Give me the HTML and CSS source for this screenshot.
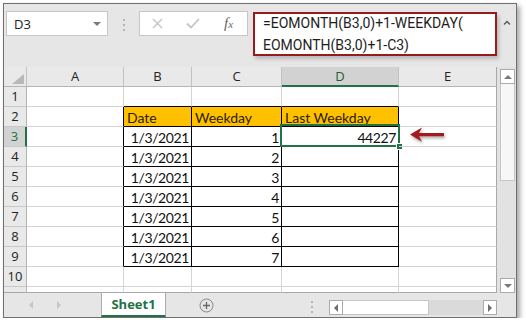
FILE: index.html
```html
<!DOCTYPE html>
<html lang="en">
<head>
    <meta charset="UTF-8">
    <meta name="viewport" content="width=device-width, initial-scale=1.0">
    <title>Last Weekday of Month</title>
    <link rel="stylesheet" href="styles.css">
</head>
<body>
    <div class="window">
        <div class="formula-area">
            <div class="name-box">
                <span>D3</span>
                <span class="drop"></span>
            </div>
            <div class="grip"><i></i><i></i><i></i></div>
            <div class="fx-buttons">
                <svg class="btn-cancel" width="11" height="11" viewBox="0 0 11 11"><path d="M1 1L10 10M10 1L1 10" stroke="#c4c4c4" stroke-width="1.4" fill="none"/></svg>
                <svg class="btn-enter" width="14" height="11" viewBox="0 0 14 11"><path d="M1 5.5L5 9.5L13 1" stroke="#c4c4c4" stroke-width="1.8" fill="none"/></svg>
                <span class="fx">f<sub>x</sub></span>
            </div>
            <div class="formula-bar">
                <div class="formula-text">=EOMONTH(B3,0)+1-WEEKDAY(<br>EOMONTH(B3,0)+1-C3)</div>
            </div>
            <div class="expand">
                <svg width="8" height="5" viewBox="0 0 8 5"><path d="M1 4.5L4 1.5L7 4.5" stroke="#555" stroke-width="1.4" fill="none"/></svg>
            </div>
        </div>

        <div class="sheet-area">
            <div class="grid">
                <div class="corner"><span class="corner-tri"></span></div>
                <div class="ch">A</div>
                <div class="ch">B</div>
                <div class="ch">C</div>
                <div class="ch sel">D</div>
                <div class="ch">E</div>

                <div class="rh">1</div>
                <div class="c"></div>
                <div class="c edge-b"></div>
                <div class="c edge-b"></div>
                <div class="c edge-b"></div>
                <div class="c"></div>

                <div class="rh">2</div>
                <div class="c edge-r"></div>
                <div class="c box head">Date</div>
                <div class="c box head">Weekday</div>
                <div class="c box head">Last Weekday</div>
                <div class="c"></div>

                <div class="rh sel">3</div>
                <div class="c edge-r"></div>
                <div class="c box num">1/3/2021</div>
                <div class="c box num">1</div>
                <div class="c box num active">44227<span class="sel-box"><span class="fill-handle"></span></span></div>
                <div class="c arrow-cell">
                    <svg class="arrow" width="40" height="20" viewBox="0 0 40 20"><path d="M2 8.5L14 1.5L11 7L36 7L36 10.3L11 10.3L14 15.8Z" fill="#a3191c"/></svg>
                </div>

                <div class="rh">4</div>
                <div class="c edge-r"></div>
                <div class="c box num">1/3/2021</div>
                <div class="c box num">2</div>
                <div class="c box"></div>
                <div class="c"></div>

                <div class="rh">5</div>
                <div class="c edge-r"></div>
                <div class="c box num">1/3/2021</div>
                <div class="c box num">3</div>
                <div class="c box"></div>
                <div class="c"></div>

                <div class="rh">6</div>
                <div class="c edge-r"></div>
                <div class="c box num">1/3/2021</div>
                <div class="c box num">4</div>
                <div class="c box"></div>
                <div class="c"></div>

                <div class="rh">7</div>
                <div class="c edge-r"></div>
                <div class="c box num">1/3/2021</div>
                <div class="c box num">5</div>
                <div class="c box"></div>
                <div class="c"></div>

                <div class="rh">8</div>
                <div class="c edge-r"></div>
                <div class="c box num">1/3/2021</div>
                <div class="c box num">6</div>
                <div class="c box"></div>
                <div class="c"></div>

                <div class="rh">9</div>
                <div class="c edge-r"></div>
                <div class="c box num">1/3/2021</div>
                <div class="c box num">7</div>
                <div class="c box"></div>
                <div class="c"></div>

                <div class="rh">10</div>
                <div class="c"></div>
                <div class="c"></div>
                <div class="c"></div>
                <div class="c"></div>
                <div class="c"></div>

                <div class="rh part"></div>
                <div class="c part"></div>
                <div class="c part"></div>
                <div class="c part"></div>
                <div class="c part"></div>
                <div class="c part"></div>
            </div>

            <div class="vscroll">
                <div class="sb-btn"><span class="tri-up"></span></div>
                <div class="sb-thumb"></div>
                <div class="sb-btn bottom"><span class="tri-down"></span></div>
            </div>
        </div>

        <div class="tab-bar">
            <div class="tab-nav">
                <span class="tri-left light"></span>
                <span class="tri-right light"></span>
            </div>
            <div class="tab">Sheet1</div>
            <div class="add-sheet">
                <svg width="15" height="15" viewBox="0 0 15 15"><circle cx="7.5" cy="7.5" r="6.5" stroke="#8a8a8a" stroke-width="1" fill="none"/><path d="M7.5 4V11M4 7.5H11" stroke="#666" stroke-width="1.3"/></svg>
            </div>
            <div class="grip tab-grip"><i></i><i></i><i></i></div>
            <div class="hscroll">
                <div class="hs-btn"><span class="tri-left"></span></div>
                <div class="hs-thumb"></div>
                <div class="hs-track"></div>
                <div class="hs-btn"><span class="tri-right"></span></div>
            </div>
        </div>
    </div>
</body>
</html>
```

FILE: styles.css
```css
* {
    box-sizing: border-box;
}

body {
    margin: 0;
    background: #fff;
    font-family: "Open Sans", sans-serif;
    color: #222;
}

.window {
    width: 514px;
    height: 315px;
    margin: 3px 0 0 3px;
    border: 1px solid #6f6f6f;
    background: #e6e6e6;
    box-shadow: 3px 3px 5px rgba(0, 0, 0, 0.35);
    display: flex;
    flex-direction: column;
}

/* formula bar row */
.formula-area {
    height: 63px;
    display: flex;
    align-items: flex-start;
    padding: 7px 0 0 2px;
}

.name-box {
    width: 102px;
    height: 25px;
    background: #fff;
    border: 1px solid #c6c6c6;
    display: flex;
    align-items: center;
    justify-content: space-between;
    padding: 0 6px 0 7px;
    font-size: 13px;
}

.drop {
    border-left: 4px solid transparent;
    border-right: 4px solid transparent;
    border-top: 4px solid #7a7a7a;
}

.grip {
    display: flex;
    flex-direction: column;
    gap: 3px;
    margin: 8px 0 0 15px;
}

.grip i {
    display: block;
    width: 2px;
    height: 2px;
    background: #b4b4b4;
}

.fx-buttons {
    width: 109px;
    height: 25px;
    margin-left: 14px;
    background: #fff;
    border: 1px solid #c6c6c6;
    display: flex;
    align-items: center;
    padding-left: 12px;
}

.btn-enter {
    margin-left: 23px;
}

.fx {
    margin-left: 24px;
    font-family: "Liberation Serif", serif;
    font-style: italic;
    font-size: 15px;
    color: #666;
}

.fx sub {
    font-size: 11px;
    vertical-align: 0;
}

.formula-bar {
    width: 244px;
    height: 44px;
    margin: 1px 0 0 5px;
    background: #fff;
    border: 2px solid #941c1c;
    box-shadow: 2px 3px 4px rgba(0, 0, 0, 0.2);
    padding-left: 8px;
    font-family: Roboto, sans-serif;
    font-size: 14px;
    line-height: 22px;
    color: #1e1e1e;
}

.formula-text {
    margin-top: -2px;
}

.expand {
    width: 19px;
    display: flex;
    justify-content: center;
    padding-top: 9px;
}

/* sheet */
.sheet-area {
    display: flex;
    height: 226px;
}

.grid {
    display: grid;
    grid-template-columns: 23px 97px 68px 90px 117px 98px;
    grid-template-rows: repeat(11, 20px) 6px;
    background: #fff;
    font-family: Lato, sans-serif;
    font-size: 14px;
    color: #111;
}

.grid > div {
    border-right: 1px solid #d4d4d4;
    border-bottom: 1px solid #d4d4d4;
}

.grid > div:nth-child(6n) {
    border-right-color: #a8a8a8;
}

.corner,
.ch,
.rh {
    background: #e9e9e9;
    font-family: "Open Sans", sans-serif;
    font-size: 13px;
    color: #222;
}

.grid > .corner,
.grid > .ch {
    border-right-color: #c2c2c2;
    border-bottom-color: #b4b4b4;
}

.grid > .rh {
    border-right-color: #b4b4b4;
    border-bottom-color: #c8c8c8;
}

.corner {
    display: flex;
    align-items: flex-end;
    justify-content: flex-end;
    padding: 0 2px 2px 0;
}

.corner-tri {
    border-left: 12px solid transparent;
    border-bottom: 10px solid #b8b8b8;
}

.ch {
    text-align: center;
    line-height: 19px;
}

.grid > .ch.sel {
    background: #d2d2d2;
    border-bottom: 2px solid #217346;
    color: #1d5c38;
}

.rh {
    text-align: center;
    line-height: 19px;
}

.grid > .rh.sel {
    background: #d2d2d2;
    border-right: 2px solid #217346;
    color: #217346;
}

.c {
    line-height: 22px;
    padding: 0 3px;
    white-space: nowrap;
}

.grid > .edge-r {
    border-right-color: #000;
}

.grid > .edge-b {
    border-bottom-color: #000;
}

.grid > .box {
    border-right-color: #000;
    border-bottom-color: #000;
}

.head {
    background: #ffc000;
    color: #2a2100;
}

.num {
    text-align: right;
    padding-right: 2px;
    letter-spacing: -0.4px;
}

.grid > .part {
    border-bottom-color: #a8a8a8;
}

.active,
.arrow-cell {
    position: relative;
}

.sel-box {
    position: absolute;
    left: -2px;
    top: -3px;
    right: -2px;
    bottom: -1px;
    border: 2px solid #217346;
}

.fill-handle {
    position: absolute;
    right: -5px;
    bottom: -5px;
    width: 7px;
    height: 7px;
    background: #217346;
    border: 1px solid #fff;
}

.arrow {
    position: absolute;
    left: 9px;
    top: -1px;
    filter: drop-shadow(1px 2px 1.5px rgba(0, 0, 0, 0.35));
}

.vscroll {
    width: 19px;
    display: flex;
    flex-direction: column;
    padding: 2px 1px 0 3px;
    background: #e2e2e2;
}

.sb-btn {
    height: 15px;
    background: #fff;
    border: 1px solid #ababab;
    display: flex;
    align-items: center;
    justify-content: center;
}

.sb-btn.bottom {
    margin-top: auto;
}

.sb-thumb {
    height: 97px;
    background: #f7f7f7;
    border: 1px solid #c6c6c6;
    border-top: none;
}

.tri-up {
    border-left: 4px solid transparent;
    border-right: 4px solid transparent;
    border-bottom: 4px solid #7a7a7a;
}

.tri-down {
    border-left: 4px solid transparent;
    border-right: 4px solid transparent;
    border-top: 4px solid #7a7a7a;
}

.tri-left {
    border-top: 4px solid transparent;
    border-bottom: 4px solid transparent;
    border-right: 4px solid #6e6e6e;
}

.tri-right {
    border-top: 4px solid transparent;
    border-bottom: 4px solid transparent;
    border-left: 4px solid #6e6e6e;
}

.tri-left.light {
    border-right-color: #c6c6c6;
}

.tri-right.light {
    border-left-color: #c6c6c6;
}

/* sheet tabs */
.tab-bar {
    height: 24px;
    display: flex;
    background: #e6e6e6;
}

.tab-nav {
    width: 97px;
    display: flex;
    align-items: center;
    gap: 24px;
    padding-left: 25px;
}

.tab {
    width: 65px;
    background: #fff;
    border-left: 1px solid #ababab;
    border-right: 1px solid #ababab;
    border-bottom: 2px solid #217346;
    text-align: center;
    font-size: 13px;
    font-weight: bold;
    color: #217346;
    line-height: 22px;
}

.add-sheet {
    width: 80px;
    display: flex;
    align-items: center;
    justify-content: center;
}

.tab-grip {
    margin: 8px 0 0 65px;
}

.hscroll {
    display: flex;
    height: 15px;
    margin: 7px 0 0 16px;
}

.hs-btn {
    width: 14px;
    background: #fff;
    border: 1px solid #ababab;
    display: flex;
    align-items: center;
    justify-content: center;
}

.hs-thumb {
    width: 86px;
    background: #fff;
    border: 1px solid #c6c6c6;
    border-left: none;
}

.hs-track {
    width: 54px;
    background: #dadada;
}
```
